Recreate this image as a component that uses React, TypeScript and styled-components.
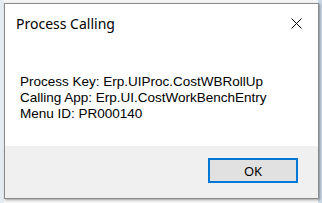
import styled, { createGlobalStyle } from 'styled-components';

const GlobalStyle = createGlobalStyle`
  html, body {
    margin: 0;
    padding: 0;
    width: 322px;
    height: 203px;
    overflow: hidden;
  }
  body {
    font-family: 'Noto Sans', 'Open Sans', Arial, sans-serif;
    background: #eef1f4;
  }
`;

const Desktop = styled.div`
  position: relative;
  width: 322px;
  height: 203px;
  overflow: hidden;
  background: linear-gradient(to right, #e6ebf0 0, #e6ebf0 4px, #f4f4f4 4px, #f4f4f4 318px, #c9d6e4 318px);
`;

const Dialog = styled.div`
  position: absolute;
  left: 4px;
  top: 3px;
  width: 313px;
  height: 194px;
  display: flex;
  flex-direction: column;
  background: #fff;
  border: 1px solid #8a8a8a;
  box-shadow: 1px 1px 2px rgba(0, 0, 0, 0.35);
`;

const TitleBar = styled.div`
  display: flex;
  align-items: center;
  justify-content: space-between;
  height: 32px;
  padding: 3px 0 0 11px;
`;

const Title = styled.div`
  font-size: 14px;
  color: #000;
`;

const Close = styled.div`
  width: 44px;
  height: 30px;
  display: flex;
  align-items: center;
  justify-content: center;
`;

const Body = styled.div`
  flex: 1;
  padding: 35px 0 0 15px;
  font-family: 'Liberation Sans', Arial, sans-serif;
  font-size: 13.5px;
  line-height: 16px;
  color: #000;
`;

const Line = styled.div`
  white-space: nowrap;
`;

const Footer = styled.div`
  height: 52px;
  background: #f0f0f0;
  display: flex;
  justify-content: flex-end;
  align-items: flex-start;
  padding: 12px 20px 0 0;
  box-sizing: border-box;
`;

const Button = styled.button`
  width: 90px;
  height: 25px;
  background: #e1e1e1;
  border: 2px solid #0078d7;
  font-family: inherit;
  font-size: 13px;
  color: #000;
  padding: 0;
`;

export default function App() {
  return (
    <>
      <GlobalStyle />
      <Desktop>
        <Dialog>
          <TitleBar>
            <Title>Process Calling</Title>
            <Close>
              <svg width="11" height="11" viewBox="0 0 11 11">
                <path d="M0.5 0.5 L10.5 10.5 M10.5 0.5 L0.5 10.5" stroke="#000" strokeWidth="1" />
              </svg>
            </Close>
          </TitleBar>
          <Body>
            <Line>Process Key: Erp.UIProc.CostWBRollUp</Line>
            <Line>Calling App: Erp.UI.CostWorkBenchEntry</Line>
            <Line>Menu ID: PR000140</Line>
          </Body>
          <Footer>
            <Button>OK</Button>
          </Footer>
        </Dialog>
      </Desktop>
    </>
  );
}
